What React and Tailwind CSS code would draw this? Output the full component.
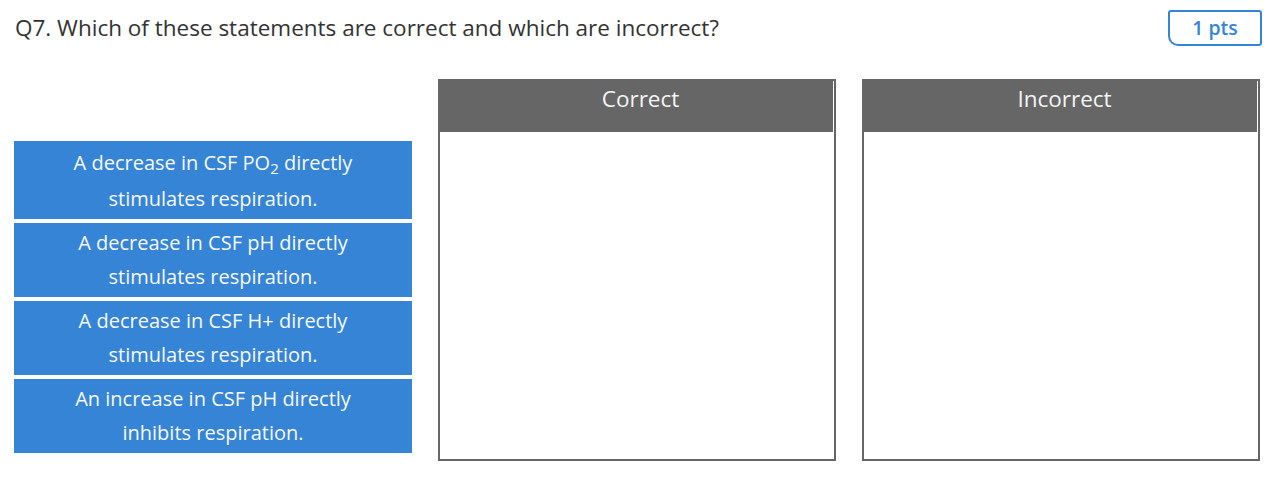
import React from 'react';

const items = [
  { lines: [<>A decrease in CSF PO<sub className="text-[15px] relative top-[4px] align-baseline">2</sub> directly</>, 'stimulates respiration.'], h: 'h-[78px]', first: 'leading-[38px]' },
  { lines: ['A decrease in CSF pH directly', 'stimulates respiration.'], h: 'h-[74px]', first: '' },
  { lines: ['A decrease in CSF H+ directly', 'stimulates respiration.'], h: 'h-[74px]', first: '' },
  { lines: ['An increase in CSF pH directly', 'inhibits respiration.'], h: 'h-[74px]', first: '' },
];

const DropBox = ({ title }) => (
  <div className="w-[398px] h-[382px] border-2 border-[#666666] flex flex-col">
    <div className="h-[53px] -mt-[2px] -ml-[1px] mr-[1px] bg-[#666666] text-[#f5f5f5] text-[22.5px] text-center pt-[3px] pl-[9px]">
      {title}
    </div>
  </div>
);

export default function App() {
  return (
    <div className="w-[1266px] h-[478px] bg-white font-['Open_Sans',sans-serif] text-[#2d3b45]">
      <div className="flex items-start justify-between pl-[15px] pr-[4px] pt-[10px]">
        <h1 className="text-[22.5px] leading-[36px] text-[#333333]">
          Q7. Which of these statements are correct and which are incorrect?
        </h1>
        <div className="w-[94px] h-[36px] border-2 border-[#3584d6] rounded-tl-[3px] rounded-tr-[3px] rounded-br-[3px] rounded-bl-[10px] flex items-center justify-center text-[#3584d6] text-[19.5px] font-semibold">
          1 pts
        </div>
      </div>

      <div className="flex gap-[26px] pl-[14px] mt-[33px]">
        <div className="w-[398px] flex flex-col gap-[4px] pt-[62px]">
          {items.map((it, i) => (
            <div
              key={i}
              className={`${it.h} bg-[#3584d6] text-[#f7f9fb] text-[20px] leading-[34px] text-center flex flex-col justify-center`}
            >
              {it.lines.map((l, j) => (
                <div key={j} className={j === 0 ? it.first : ''}>{l}</div>
              ))}
            </div>
          ))}
        </div>
        <DropBox title="Correct" />
        <DropBox title="Incorrect" />
      </div>
    </div>
  );
}
